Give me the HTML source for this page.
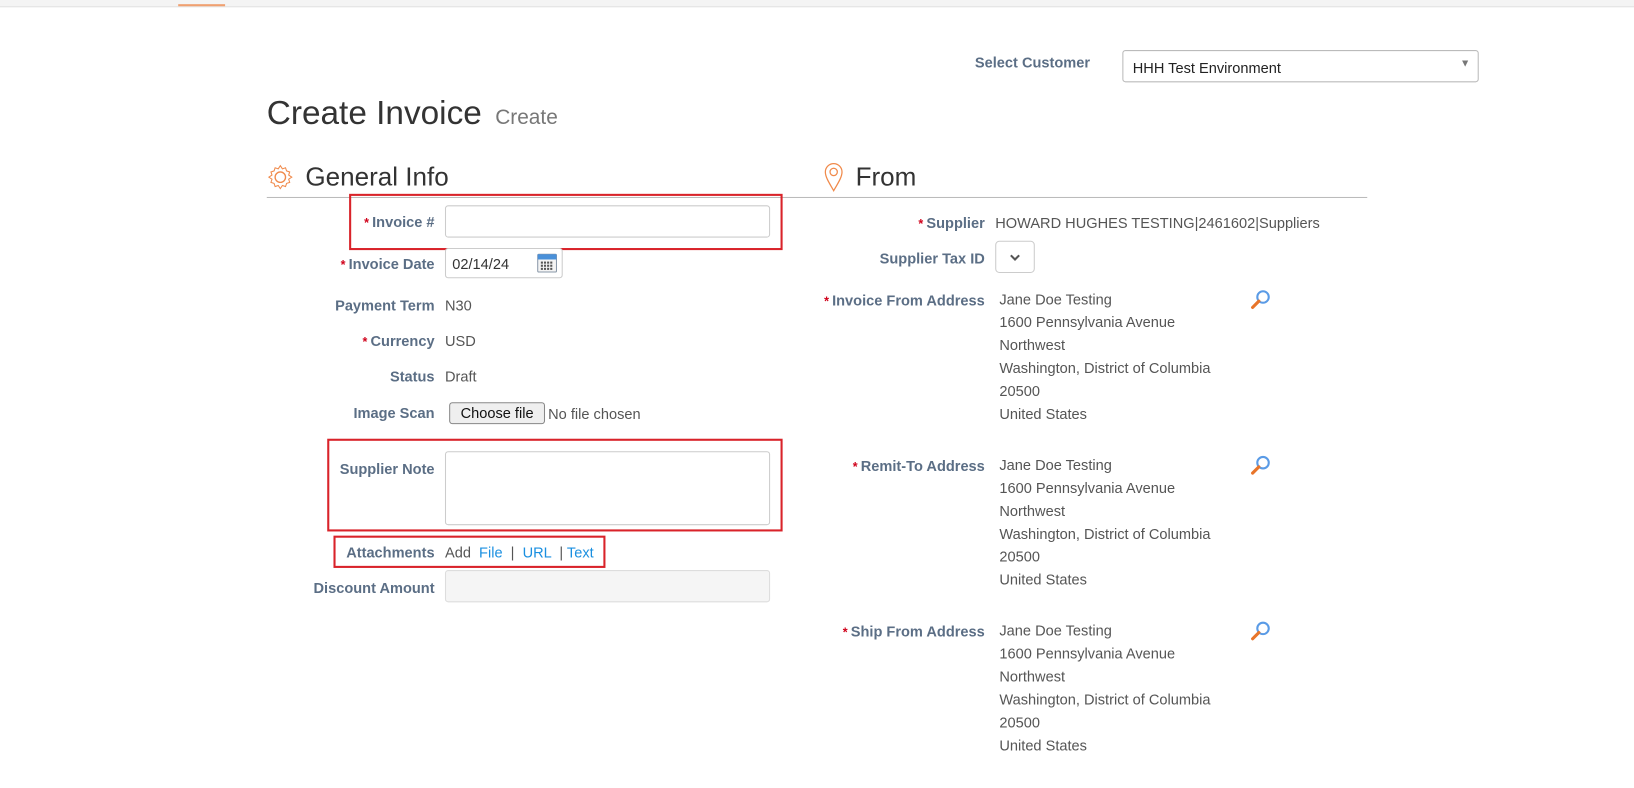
<!DOCTYPE html>
<html><head><meta charset="utf-8"><style>
html,body{margin:0;padding:0;background:#fff;overflow:hidden;width:1634px;height:787px}
#w{position:absolute;left:0;top:0;width:1568px;height:756px;transform:scale(1.0421);transform-origin:0 0;font-family:"Liberation Sans",Arial,sans-serif}
.a{position:absolute;white-space:nowrap}
.l{font-size:14px;font-weight:bold;color:#5b6e85;text-align:right;line-height:16px}
.l b{color:#d0021b;font-size:12px;margin-right:3px}
.v{font-size:14px;color:#555;line-height:16px}
.in{position:absolute;border:1px solid #ccc;border-radius:3px;background:#fff;box-sizing:border-box}
.red{position:absolute;border:2px solid #d9232a;box-sizing:border-box}
.lk{color:#1a8fe0}
.addr{font-size:14px;color:#555;line-height:22px}
</style></head><body><div id="w">
<div class="a" style="left:0;top:0;width:1568px;height:6px;background:#f4f4f4;border-bottom:1px solid #e2e2e2"></div>
<div class="a" style="left:171px;top:4px;width:45px;height:2px;background:#f0a070"></div>

<div class="a l" style="left:900px;top:52px;width:146px">Select Customer</div>
<div class="in" style="left:1077px;top:48px;width:342px;height:31px;border-color:#bbb"></div>
<div class="a v" style="left:1087px;top:57px;color:#222">HHH Test Environment</div>
<div class="a" style="left:1401px;top:56px;font-size:10px;color:#777">▼</div>

<div class="a" style="left:256px;top:88px;font-size:32px;color:#333;line-height:40px">Create Invoice <span style="font-size:20px;color:#777;margin-left:4px">Create</span></div>

<svg class="a" style="left:256px;top:157px" width="26" height="26" viewBox="0 0 26 26"><circle cx="13" cy="13" r="5" fill="none" stroke="#f08a4b" stroke-width="1.3"/><path d="M13 2l2 3 3-1 1 3 3 1-1 3 3 2-3 2 1 3-3 1-1 3-3-1-2 3-2-3-3 1-1-3-3-1 1-3-3-2 3-2-1-3 3-1 1-3 3 1z" fill="none" stroke="#f08a4b" stroke-width="1"/></svg>
<div class="a" style="left:293px;top:155px;font-size:25px;color:#333;line-height:30px">General Info</div>
<svg class="a" style="left:790px;top:155px" width="20" height="30" viewBox="0 0 20 30"><path d="M10 28C6 21 2 15 2 10a8 8 0 0 1 16 0c0 5-4 11-8 18z" fill="none" stroke="#f08a4b" stroke-width="1.2"/><circle cx="10" cy="10" r="3.5" fill="none" stroke="#f08a4b" stroke-width="1.2"/></svg>
<div class="a" style="left:821px;top:155px;font-size:25px;color:#333;line-height:30px">From</div>
<div class="a" style="left:256px;top:189px;width:1056px;height:1px;background:#bbb"></div>

<!-- left column -->
<div class="red" style="left:335px;top:186px;width:416px;height:54px"></div>
<div class="a l" style="left:300px;top:205px;width:117px"><b>*</b>Invoice #</div>
<div class="in" style="left:427px;top:197px;width:312px;height:31px"></div>

<div class="a l" style="left:280px;top:245px;width:137px"><b>*</b>Invoice Date</div>
<div class="in" style="left:427px;top:238px;width:113px;height:29px"></div>
<div class="a v" style="left:434px;top:245px;color:#333">02/14/24</div>
<svg class="a" style="left:515px;top:241px" width="20" height="22" viewBox="0 0 20 22"><rect x="1" y="3" width="18" height="17" rx="1" fill="#f4f4f4" stroke="#8a98a8"/><rect x="1" y="3" width="18" height="5" fill="#4a90d9"/><g fill="#555"><rect x="4" y="10" width="2" height="2"/><rect x="7" y="10" width="2" height="2"/><rect x="10" y="10" width="2" height="2"/><rect x="13" y="10" width="2" height="2"/><rect x="4" y="13" width="2" height="2"/><rect x="7" y="13" width="2" height="2"/><rect x="10" y="13" width="2" height="2"/><rect x="13" y="13" width="2" height="2"/><rect x="4" y="16" width="2" height="2"/><rect x="7" y="16" width="2" height="2"/><rect x="10" y="16" width="2" height="2"/><rect x="13" y="16" width="2" height="2"/></g></svg>

<div class="a l" style="left:280px;top:285px;width:137px">Payment Term</div><div class="a v" style="left:427px;top:285px">N30</div>
<div class="a l" style="left:280px;top:319px;width:137px"><b>*</b>Currency</div><div class="a v" style="left:427px;top:319px">USD</div>
<div class="a l" style="left:280px;top:353px;width:137px">Status</div><div class="a v" style="left:427px;top:353px">Draft</div>
<div class="a l" style="left:280px;top:388px;width:137px">Image Scan</div>
<div class="a" style="left:431px;top:386px;width:92px;height:21px;border:1px solid #888;border-radius:3px;background:#efefef;box-sizing:border-box;font-size:14px;color:#111;text-align:center;line-height:19px">Choose file</div>
<div class="a v" style="left:526px;top:389px">No file chosen</div>

<div class="red" style="left:314px;top:421px;width:437px;height:89px"></div>
<div class="a l" style="left:280px;top:442px;width:137px">Supplier Note</div>
<div class="in" style="left:427px;top:433px;width:312px;height:71px"></div>

<div class="red" style="left:320px;top:514px;width:261px;height:31px"></div>
<div class="a l" style="left:280px;top:522px;width:137px">Attachments</div>
<div class="a v" style="left:427px;top:522px">Add&nbsp; <span class="lk">File</span> &nbsp;| &nbsp;<span class="lk">URL</span> &nbsp;| <span class="lk">Text</span></div>

<div class="a l" style="left:280px;top:556px;width:137px">Discount Amount</div>
<div class="in" style="left:427px;top:547px;width:312px;height:31px;background:#f5f5f5;border-color:#ddd"></div>

<!-- right column -->
<div class="a l" style="left:800px;top:206px;width:145px"><b>*</b>Supplier</div>
<div class="a v" style="left:955px;top:206px">HOWARD HUGHES TESTING|2461602|Suppliers</div>
<div class="a l" style="left:800px;top:240px;width:145px">Supplier Tax ID</div>
<div class="in" style="left:955px;top:231px;width:38px;height:31px;border-radius:4px"></div>
<svg class="a" style="left:968px;top:243px" width="12" height="8" viewBox="0 0 12 8"><path d="M2 2l4 4 4-4" fill="none" stroke="#555" stroke-width="2"/></svg>

<div class="a l" style="left:760px;top:280px;width:185px"><b>*</b>Invoice From Address</div>
<div class="a addr" style="left:959px;top:276px">Jane Doe Testing<br>1600 Pennsylvania Avenue<br>Northwest<br>Washington, District of Columbia<br>20500<br>United States</div>
<div class="a l" style="left:760px;top:439px;width:185px"><b>*</b>Remit-To Address</div>
<div class="a addr" style="left:959px;top:435px">Jane Doe Testing<br>1600 Pennsylvania Avenue<br>Northwest<br>Washington, District of Columbia<br>20500<br>United States</div>
<div class="a l" style="left:760px;top:598px;width:185px"><b>*</b>Ship From Address</div>
<div class="a addr" style="left:959px;top:594px">Jane Doe Testing<br>1600 Pennsylvania Avenue<br>Northwest<br>Washington, District of Columbia<br>20500<br>United States</div>

<svg class="a" style="left:1199px;top:277px" width="22" height="22" viewBox="0 0 22 22"><circle cx="13" cy="8" r="5.5" fill="none" stroke="#5a9be6" stroke-width="2"/><path d="M9 12l-6 6" stroke="#e8752a" stroke-width="3" stroke-linecap="round"/></svg>
<svg class="a" style="left:1199px;top:436px" width="22" height="22" viewBox="0 0 22 22"><circle cx="13" cy="8" r="5.5" fill="none" stroke="#5a9be6" stroke-width="2"/><path d="M9 12l-6 6" stroke="#e8752a" stroke-width="3" stroke-linecap="round"/></svg>
<svg class="a" style="left:1199px;top:595px" width="22" height="22" viewBox="0 0 22 22"><circle cx="13" cy="8" r="5.5" fill="none" stroke="#5a9be6" stroke-width="2"/><path d="M9 12l-6 6" stroke="#e8752a" stroke-width="3" stroke-linecap="round"/></svg>
</div></body></html>
